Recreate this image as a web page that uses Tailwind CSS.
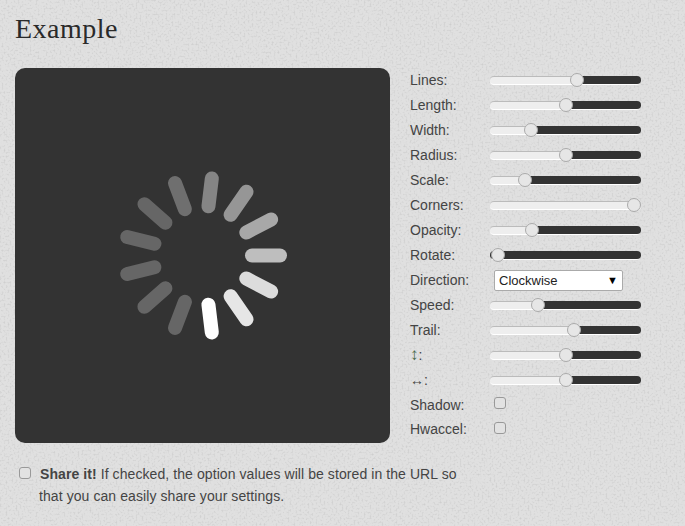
<!DOCTYPE html>
<html lang="en">
<head>
    <meta charset="UTF-8">
    <title>Example</title>
    <script src="https://cdn.jsdelivr.net/npm/@tailwindcss/browser@4"></script>
</head>
<body class="relative w-[685px] h-[526px] overflow-hidden bg-[#e0e0e0] font-['Liberation_Sans',Arial,sans-serif] text-[14px] text-[#444]">
    <!-- paper texture -->
    <svg class="absolute inset-0 opacity-60" width="685" height="526" aria-hidden="true">
        <filter id="paper">
            <feTurbulence type="fractalNoise" baseFrequency="0.5" numOctaves="3" seed="4"/>
            <feColorMatrix type="matrix" values="0 0 0 0 0.5  0 0 0 0 0.5  0 0 0 0 0.5  2.2 0 0 0 -1.05"/>
        </filter>
        <rect width="685" height="526" filter="url(#paper)"/>
    </svg>

    <div class="relative px-[15px]">
        <h1 class="h-[68px] pt-[11px] font-['Liberation_Serif',serif] text-[28px] leading-[36px] tracking-[0.5px] text-[#2a2a2a]">Example</h1>

        <div class="flex">
            <!-- Preview -->
            <div class="w-[375px] h-[375px] rounded-[10px] bg-[#333]">
                <svg width="375" height="375" viewBox="-187.5 -187.5 375 375">
                    <rect x="42.5" y="-7" width="42" height="14" rx="7" fill="#bebebe"/>
                    <rect x="42.5" y="-7" width="42" height="14" rx="7" fill="#dcdcdc" transform="rotate(27.7)"/>
                    <rect x="42.5" y="-7" width="42" height="14" rx="7" fill="#e6e6e6" transform="rotate(55.4)"/>
                    <rect x="42.5" y="-7" width="42" height="14" rx="7" fill="#ffffff" transform="rotate(83.1)"/>
                    <rect x="42.5" y="-7" width="42" height="14" rx="7" fill="#666666" transform="rotate(110.8)"/>
                    <rect x="42.5" y="-7" width="42" height="14" rx="7" fill="#666666" transform="rotate(138.5)"/>
                    <rect x="42.5" y="-7" width="42" height="14" rx="7" fill="#666666" transform="rotate(166.2)"/>
                    <rect x="42.5" y="-7" width="42" height="14" rx="7" fill="#666666" transform="rotate(193.8)"/>
                    <rect x="42.5" y="-7" width="42" height="14" rx="7" fill="#666666" transform="rotate(221.5)"/>
                    <rect x="42.5" y="-7" width="42" height="14" rx="7" fill="#6f6f6f" transform="rotate(249.2)"/>
                    <rect x="42.5" y="-7" width="42" height="14" rx="7" fill="#858585" transform="rotate(276.9)"/>
                    <rect x="42.5" y="-7" width="42" height="14" rx="7" fill="#969696" transform="rotate(304.6)"/>
                    <rect x="42.5" y="-7" width="42" height="14" rx="7" fill="#a8a8a8" transform="rotate(332.3)"/>
                </svg>
            </div>

            <!-- Options -->
            <div class="ml-[20px]">
                <div class="flex items-center h-[25px]">
                    <label class="w-[80px]">Lines:</label>
                    <div class="flex w-[151px] h-[9px]">
                        <div class="relative w-[87px] rounded-l-[4px] bg-[#eee] border-t border-b border-t-[#bbb] border-b-white"><span class="absolute -right-[7px] -top-[4px] w-[14px] h-[14px] rounded-full bg-[#e6e6e6] border border-[#aaa]"></span></div>
                        <div class="flex-1 rounded-r-[4px] bg-[#333] border-b border-white"></div>
                    </div>
                </div>
                <div class="flex items-center h-[25px]">
                    <label class="w-[80px]">Length:</label>
                    <div class="flex w-[151px] h-[9px]">
                        <div class="relative w-[76px] rounded-l-[4px] bg-[#eee] border-t border-b border-t-[#bbb] border-b-white"><span class="absolute -right-[7px] -top-[4px] w-[14px] h-[14px] rounded-full bg-[#e6e6e6] border border-[#aaa]"></span></div>
                        <div class="flex-1 rounded-r-[4px] bg-[#333] border-b border-white"></div>
                    </div>
                </div>
                <div class="flex items-center h-[25px]">
                    <label class="w-[80px]">Width:</label>
                    <div class="flex w-[151px] h-[9px]">
                        <div class="relative w-[41px] rounded-l-[4px] bg-[#eee] border-t border-b border-t-[#bbb] border-b-white"><span class="absolute -right-[7px] -top-[4px] w-[14px] h-[14px] rounded-full bg-[#e6e6e6] border border-[#aaa]"></span></div>
                        <div class="flex-1 rounded-r-[4px] bg-[#333] border-b border-white"></div>
                    </div>
                </div>
                <div class="flex items-center h-[25px]">
                    <label class="w-[80px]">Radius:</label>
                    <div class="flex w-[151px] h-[9px]">
                        <div class="relative w-[76px] rounded-l-[4px] bg-[#eee] border-t border-b border-t-[#bbb] border-b-white"><span class="absolute -right-[7px] -top-[4px] w-[14px] h-[14px] rounded-full bg-[#e6e6e6] border border-[#aaa]"></span></div>
                        <div class="flex-1 rounded-r-[4px] bg-[#333] border-b border-white"></div>
                    </div>
                </div>
                <div class="flex items-center h-[25px]">
                    <label class="w-[80px]">Scale:</label>
                    <div class="flex w-[151px] h-[9px]">
                        <div class="relative w-[35px] rounded-l-[4px] bg-[#eee] border-t border-b border-t-[#bbb] border-b-white"><span class="absolute -right-[7px] -top-[4px] w-[14px] h-[14px] rounded-full bg-[#e6e6e6] border border-[#aaa]"></span></div>
                        <div class="flex-1 rounded-r-[4px] bg-[#333] border-b border-white"></div>
                    </div>
                </div>
                <div class="flex items-center h-[25px]">
                    <label class="w-[80px]">Corners:</label>
                    <div class="flex w-[151px] h-[9px]">
                        <div class="relative w-[144px] rounded-l-[4px] bg-[#eee] border-t border-b border-t-[#bbb] border-b-white"><span class="absolute -right-[7px] -top-[4px] w-[14px] h-[14px] rounded-full bg-[#e6e6e6] border border-[#aaa]"></span></div>
                        <div class="flex-1 rounded-r-[4px] bg-[#eee] border-t border-b border-t-[#bbb] border-b-white"></div>
                    </div>
                </div>
                <div class="flex items-center h-[25px]">
                    <label class="w-[80px]">Opacity:</label>
                    <div class="flex w-[151px] h-[9px]">
                        <div class="relative w-[42px] rounded-l-[4px] bg-[#eee] border-t border-b border-t-[#bbb] border-b-white"><span class="absolute -right-[7px] -top-[4px] w-[14px] h-[14px] rounded-full bg-[#e6e6e6] border border-[#aaa]"></span></div>
                        <div class="flex-1 rounded-r-[4px] bg-[#333] border-b border-white"></div>
                    </div>
                </div>
                <div class="flex items-center h-[25px]">
                    <label class="w-[80px]">Rotate:</label>
                    <div class="flex w-[151px] h-[9px]">
                        <div class="relative w-[8px] rounded-l-[4px] bg-[#333] border-b border-white"><span class="absolute -right-[7px] -top-[3px] w-[14px] h-[14px] rounded-full bg-[#e6e6e6] border border-[#aaa]"></span></div>
                        <div class="flex-1 rounded-r-[4px] bg-[#333] border-b border-white"></div>
                    </div>
                </div>
                <div class="flex items-center h-[25px]">
                    <label class="w-[84px]">Direction:</label>
                    <div class="relative">
                        <select class="block appearance-none w-[129px] h-[21px] pl-[4px] rounded-[2px] bg-white border border-[#aaa] text-[13px] text-[#222]">
                            <option>Clockwise</option>
                        </select>
                        <span class="absolute right-[5px] top-[4px] text-[11px] leading-[13px] text-black">▼</span>
                    </div>
                </div>
                <div class="flex items-center h-[25px]">
                    <label class="w-[80px]">Speed:</label>
                    <div class="flex w-[151px] h-[9px]">
                        <div class="relative w-[48px] rounded-l-[4px] bg-[#eee] border-t border-b border-t-[#bbb] border-b-white"><span class="absolute -right-[7px] -top-[4px] w-[14px] h-[14px] rounded-full bg-[#e6e6e6] border border-[#aaa]"></span></div>
                        <div class="flex-1 rounded-r-[4px] bg-[#333] border-b border-white"></div>
                    </div>
                </div>
                <div class="flex items-center h-[25px]">
                    <label class="w-[80px]">Trail:</label>
                    <div class="flex w-[151px] h-[9px]">
                        <div class="relative w-[84px] rounded-l-[4px] bg-[#eee] border-t border-b border-t-[#bbb] border-b-white"><span class="absolute -right-[7px] -top-[4px] w-[14px] h-[14px] rounded-full bg-[#e6e6e6] border border-[#aaa]"></span></div>
                        <div class="flex-1 rounded-r-[4px] bg-[#333] border-b border-white"></div>
                    </div>
                </div>
                <div class="flex items-center h-[25px]">
                    <label class="w-[80px]"><span class="text-[17px] leading-[14px] font-['Liberation_Serif',serif] text-[#4a6a4a]">↕</span>:</label>
                    <div class="flex w-[151px] h-[9px]">
                        <div class="relative w-[76px] rounded-l-[4px] bg-[#eee] border-t border-b border-t-[#bbb] border-b-white"><span class="absolute -right-[7px] -top-[4px] w-[14px] h-[14px] rounded-full bg-[#e6e6e6] border border-[#aaa]"></span></div>
                        <div class="flex-1 rounded-r-[4px] bg-[#333] border-b border-white"></div>
                    </div>
                </div>
                <div class="flex items-center h-[25px]">
                    <label class="w-[80px]">↔:</label>
                    <div class="flex w-[151px] h-[9px]">
                        <div class="relative w-[76px] rounded-l-[4px] bg-[#eee] border-t border-b border-t-[#bbb] border-b-white"><span class="absolute -right-[7px] -top-[4px] w-[14px] h-[14px] rounded-full bg-[#e6e6e6] border border-[#aaa]"></span></div>
                        <div class="flex-1 rounded-r-[4px] bg-[#333] border-b border-white"></div>
                    </div>
                </div>
                <div class="flex h-[25px] leading-[25px]">
                    <label class="w-[84px]">Shadow:</label>
                    <input type="checkbox" class="appearance-none w-[12px] h-[12px] mt-[4px] rounded-[3px] bg-[#e2e2e2] border border-[#999]">
                </div>
                <div class="flex h-[22px] leading-[22px]">
                    <label class="w-[84px]">Hwaccel:</label>
                    <input type="checkbox" class="appearance-none w-[12px] h-[12px] mt-[4px] rounded-[3px] bg-[#e2e2e2] border border-[#999]">
                </div>
            </div>
        </div>

        <!-- Share -->
        <div class="flex mt-[20px] pl-[4px]">
            <input type="checkbox" class="appearance-none shrink-0 w-[12px] h-[12px] mt-[4px] mr-[8px] rounded-[3px] bg-[#e2e2e2] border border-[#999]">
            <p class="w-[425px] leading-[22px] tracking-[0.08px]"><b class="ml-[1px]">Share it!</b> If checked, the option values will be stored in the URL so that you can easily share your settings.</p>
        </div>
    </div>
</body>
</html>
